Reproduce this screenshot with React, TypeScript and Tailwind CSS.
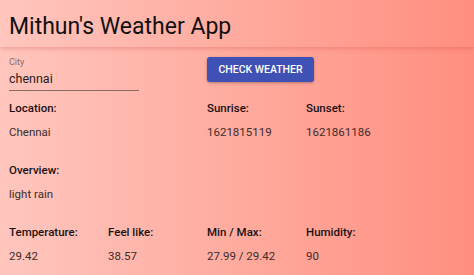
const font = { fontFamily: "Roboto, 'Liberation Sans', sans-serif" };

function Field({ label, value }: { label: string; value: string }) {
  return (
    <div className="flex flex-col">
      <span className="text-[11.5px] font-medium leading-[16px] text-[#1a1212]">{label}</span>
      <span className="mt-[8px] text-[11.5px] leading-[16px] text-[#3d2c2a]">{value}</span>
    </div>
  );
}

export default function App() {
  return (
    <div
      className="h-[275px] w-[474px] overflow-hidden bg-gradient-to-r from-[#ffc6be] to-[#ff8e7f]"
      style={font}
    >
      {/* Header */}
      <header className="flex h-[47px] items-center px-[9px] pt-[5px] shadow-[0_2px_4px_rgba(200,60,50,0.25)]">
        <h1 className="text-[23px] leading-none text-[#111]">Mithun's Weather App</h1>
      </header>

      {/* Search */}
      <div className="grid grid-cols-[198px_1fr] px-[9px] pt-[9px]">
        <div className="flex w-[130px] flex-col border-b border-[#8a6a66]">
          <span className="text-[9px] leading-[12px] text-[#8a6e6a]">City</span>
          <span className="pb-[3px] pt-[3px] text-[12.5px] leading-[16px] text-[#2a1c1a]">chennai</span>
        </div>
        <div>
          <button
            type="button"
            className="h-[25px] w-[107px] rounded-[3px] bg-[#3f51b5] text-[10.5px] font-medium uppercase text-white shadow-[0_1px_3px_rgba(0,0,0,0.3)]"
          >
            Check Weather
          </button>
        </div>
      </div>

      {/* Results */}
      <div className="grid grid-cols-[99px_99px_99px_99px] gap-y-[22px] px-[9px] pt-[9px]">
        <Field label="Location:" value="Chennai" />
        <div />
        <Field label="Sunrise:" value="1621815119" />
        <Field label="Sunset:" value="1621861186" />

        <div className="col-span-4">
          <Field label="Overview:" value="light rain" />
        </div>

        <Field label="Temperature:" value="29.42" />
        <Field label="Feel like:" value="38.57" />
        <Field label="Min / Max:" value="27.99 / 29.42" />
        <Field label="Humidity:" value="90" />
      </div>
    </div>
  );
}
